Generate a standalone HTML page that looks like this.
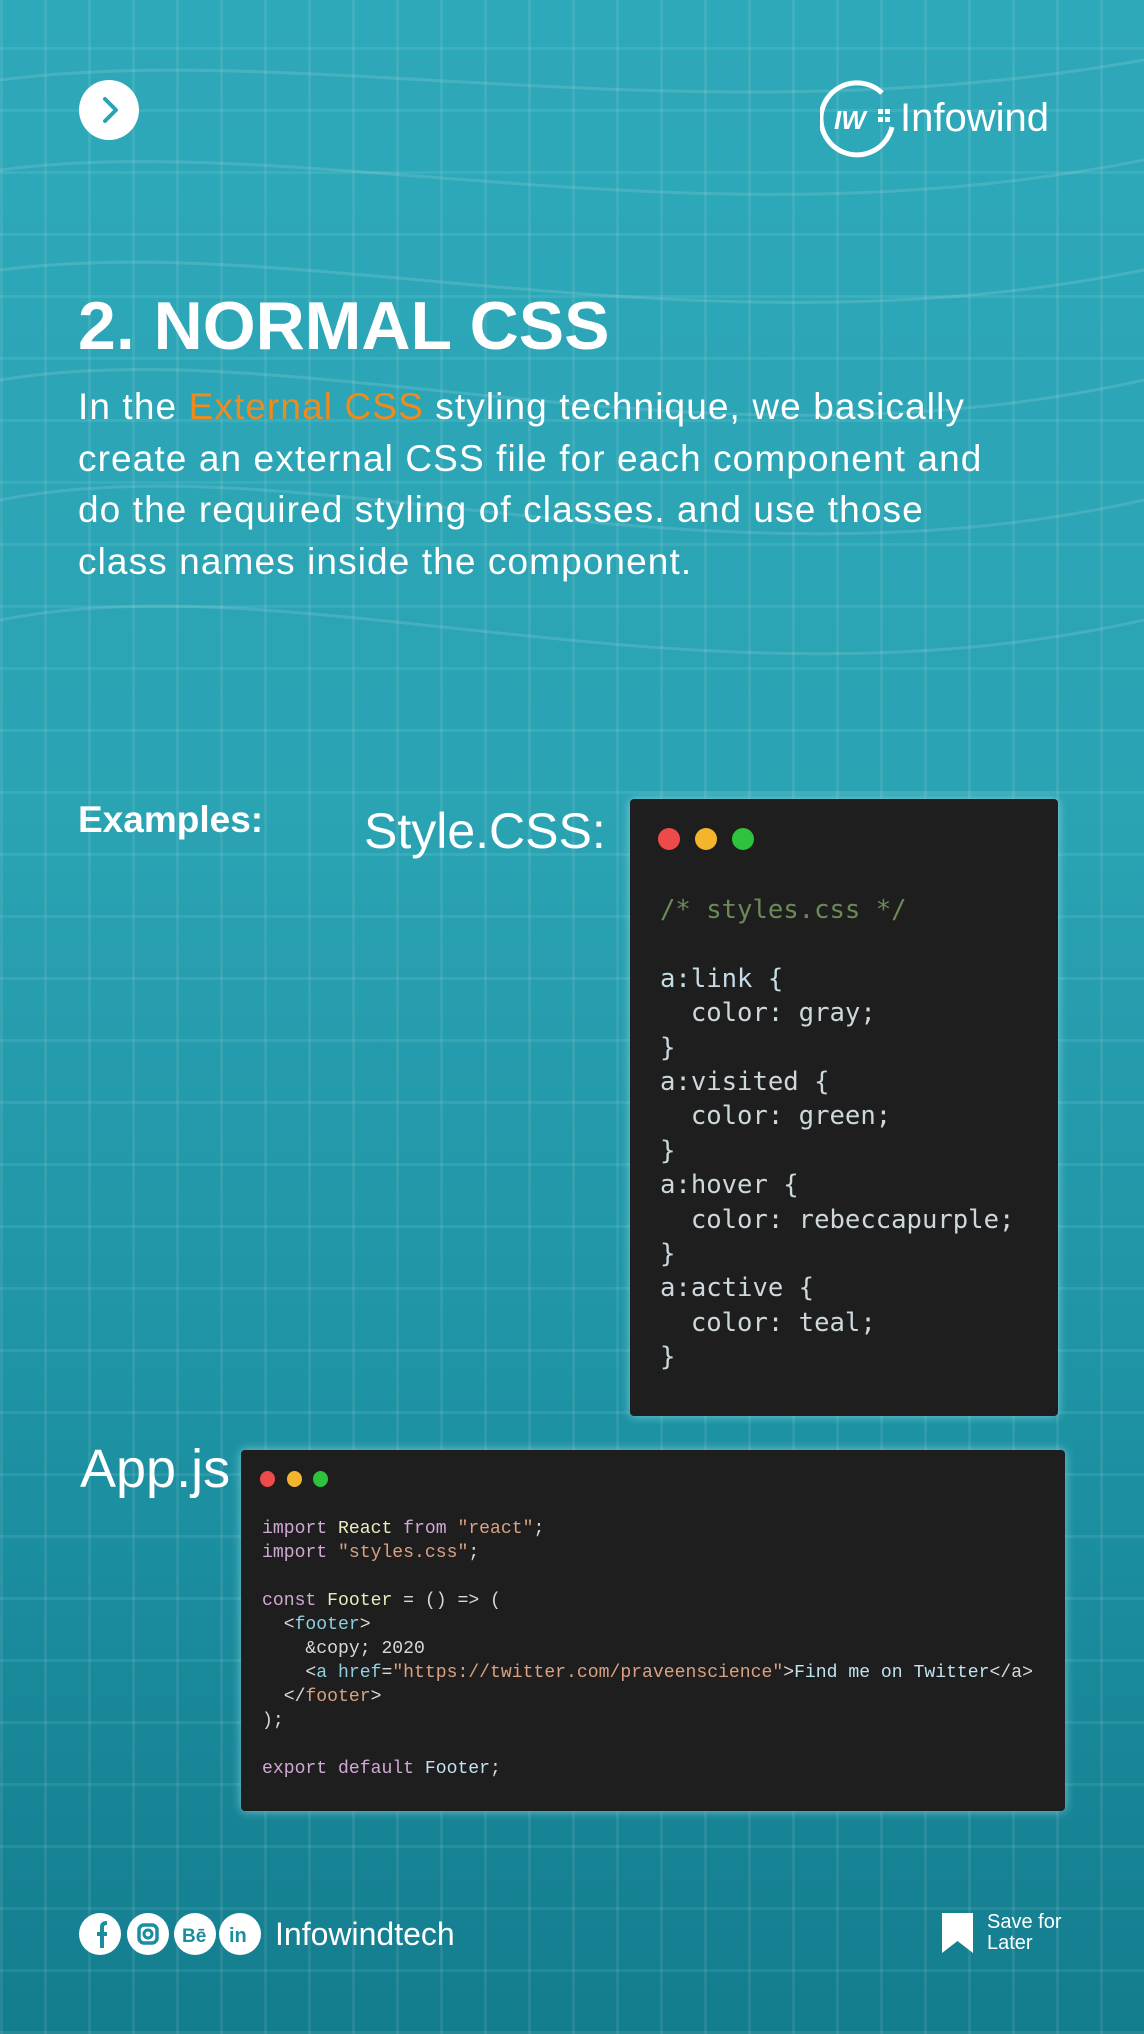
<!DOCTYPE html>
<html><head><meta charset="utf-8"><style>
*{margin:0;padding:0;box-sizing:border-box}
body{width:1144px;height:2034px;overflow:hidden;position:relative;font-family:"Liberation Sans",sans-serif;color:#fff;
background:linear-gradient(180deg,#2ea9b9 0%,#2aa3b3 40%,#1d92a3 70%,#137d8e 100%)}
.grid{position:absolute;left:0;top:0;width:1144px;height:2034px;
background-image:repeating-linear-gradient(90deg,rgba(255,255,255,.08) 0 3px,transparent 3px 44px),repeating-linear-gradient(0deg,rgba(255,255,255,.08) 0 3px,transparent 3px 62px)}
.abs{position:absolute;white-space:pre}
.box{position:absolute;background:#1e1e1e;border-radius:4px;box-shadow:0 0 10px rgba(180,240,250,.6)}
.dot{position:absolute;border-radius:50%}
.mono{font-family:"DejaVu Sans Mono","Liberation Mono",monospace}
.js{font-family:"Liberation Mono",monospace;font-size:18.1px;line-height:24px;color:#d8d8d8}
</style></head><body>
<div class="grid"></div>
<svg class="abs" style="left:0;top:0" width="1144" height="800">
<g fill="none" stroke="rgba(255,255,255,.12)" stroke-width="3">
<path d="M0 80 C300 40 700 140 1144 60"/><path d="M0 170 C300 130 700 250 1144 160"/><path d="M0 270 C300 230 700 360 1144 270"/><path d="M0 380 C300 330 700 480 1144 380"/><path d="M0 500 C300 440 700 600 1144 500"/><path d="M0 620 C300 560 700 720 1144 620"/>
</g></svg>
<div class="abs" style="left:79px;top:80px;width:60px;height:60px;border-radius:50%;background:#fff"></div>
<svg class="abs" style="left:79px;top:80px" width="60" height="60"><path d="M26 19 L37 30 L26 41" fill="none" stroke="#2aa3b3" stroke-width="4" stroke-linecap="round" stroke-linejoin="round"/></svg>
<svg class="abs" style="left:820px;top:79px" width="80" height="80"><path d="M62 14 A36 36 0 1 0 72 48" fill="none" stroke="#fff" stroke-width="5"/><text x="14" y="50" font-family="Liberation Sans" font-weight="bold" font-style="italic" font-size="26" fill="#fff">IW</text><rect x="58" y="30" width="5" height="5" fill="#fff"/><rect x="65" y="30" width="5" height="5" fill="#fff"/><rect x="58" y="38" width="5" height="5" fill="#fff"/><rect x="65" y="38" width="5" height="5" fill="#fff"/></svg>
<div class="abs" style="left:900px;top:95px;font-size:40px;line-height:46px">Infowind</div>
<div class="abs" style="left:78px;top:286px;font-size:68px;font-weight:bold;line-height:80px">2. NORMAL CSS</div>
<div class="abs" style="left:78px;top:381px;font-size:37px;line-height:51.5px;letter-spacing:1.1px">In the <span style="color:#f08a1c">External CSS</span> styling technique, we basically
create an external CSS file for each component and
do the required styling of classes. and use those
class names inside the component.</div>
<div class="abs" style="left:78px;top:798px;font-size:37px;font-weight:bold;line-height:44px">Examples:</div>
<div class="abs" style="left:364px;top:800px;font-size:50px;line-height:62px">Style.CSS:</div>
<div class="box" style="left:630px;top:799px;width:428px;height:617px"></div>
<div class="dot" style="left:658px;top:828px;width:22px;height:22px;background:#ef4a4a"></div>
<div class="dot" style="left:695px;top:828px;width:22px;height:22px;background:#f4b52c"></div>
<div class="dot" style="left:732px;top:828px;width:22px;height:22px;background:#2ec23e"></div>
<div class="abs mono" style="left:660px;top:893px;font-size:25.6px;line-height:34.4px;color:#cdd8dd"><span style="color:#6b8a58">/* styles.css */</span>

<span style="color:#c5dce6">a:link {</span>
  color: gray;
}
a:visited {
  color: green;
}
a:hover {
  color: rebeccapurple;
}
a:active {
  color: teal;
}</div>
<div class="abs" style="left:80px;top:1437px;font-size:54px;line-height:64px">App.js</div>
<div class="box" style="left:241px;top:1450px;width:824px;height:361px"></div>
<div class="dot" style="left:260px;top:1471px;width:15px;height:16px;background:#ef4a4a"></div>
<div class="dot" style="left:287px;top:1471px;width:15px;height:16px;background:#f4b52c"></div>
<div class="dot" style="left:313px;top:1471px;width:15px;height:16px;background:#2ec23e"></div>
<div class="abs js" style="left:262px;top:1517px"><span style="color:#d0a8d4">import</span> <span style="color:#ecebbf">React</span> <span style="color:#d0a8d4">from</span> <span style="color:#d9a182">"react"</span>;
<span style="color:#d0a8d4">import</span> <span style="color:#d9a182">"styles.css"</span>;

<span style="color:#d0a8d4">const</span> <span style="color:#ecebbf">Footer</span> = () =&gt; (
  &lt;<span style="color:#8fd0e0">footer</span>&gt;
    &amp;copy; 2020
    &lt;<span style="color:#8fd0e0">a href</span>=<span style="color:#d9a182">"https://twitter.com/praveenscience"</span>&gt;<span style="color:#bfe3ef">Find me on Twitter</span>&lt;/a&gt;
  &lt;/<span style="color:#d9a182">footer</span>&gt;
);

<span style="color:#d0a8d4">export default</span> <span style="color:#bfe3ef">Footer</span>;</div>
<svg class="abs" style="left:78px;top:1912px" width="190" height="44">
<g fill="#fff"><circle cx="22" cy="22" r="21"/><circle cx="70" cy="22" r="21"/><circle cx="117" cy="22" r="21"/><circle cx="162" cy="22" r="21"/></g>
<path d="M24 36 V22 H29 M19 22 H29 M24 22 V15 Q24 11 29 11" fill="none" stroke="#1a8ea0" stroke-width="4"/>
<rect x="61" y="13" width="18" height="18" rx="5" fill="none" stroke="#1a8ea0" stroke-width="3.5"/><circle cx="70" cy="22" r="4" fill="none" stroke="#1a8ea0" stroke-width="3"/>
<text x="104" y="30" font-family="Liberation Sans" font-weight="bold" font-size="19" fill="#1a8ea0">Bē</text>
<text x="151" y="30" font-family="Liberation Sans" font-weight="bold" font-size="20" fill="#1a8ea0">in</text>
</svg>
<div class="abs" style="left:275px;top:1914px;font-size:32px;line-height:40px">Infowindtech</div>
<svg class="abs" style="left:942px;top:1913px" width="32" height="40"><path d="M0 0 H31 V40 L15.5 28 L0 40 Z" fill="#fff"/></svg>
<div class="abs" style="left:987px;top:1912px;font-size:20px;line-height:21px">Save for
Later</div>
</body></html>
